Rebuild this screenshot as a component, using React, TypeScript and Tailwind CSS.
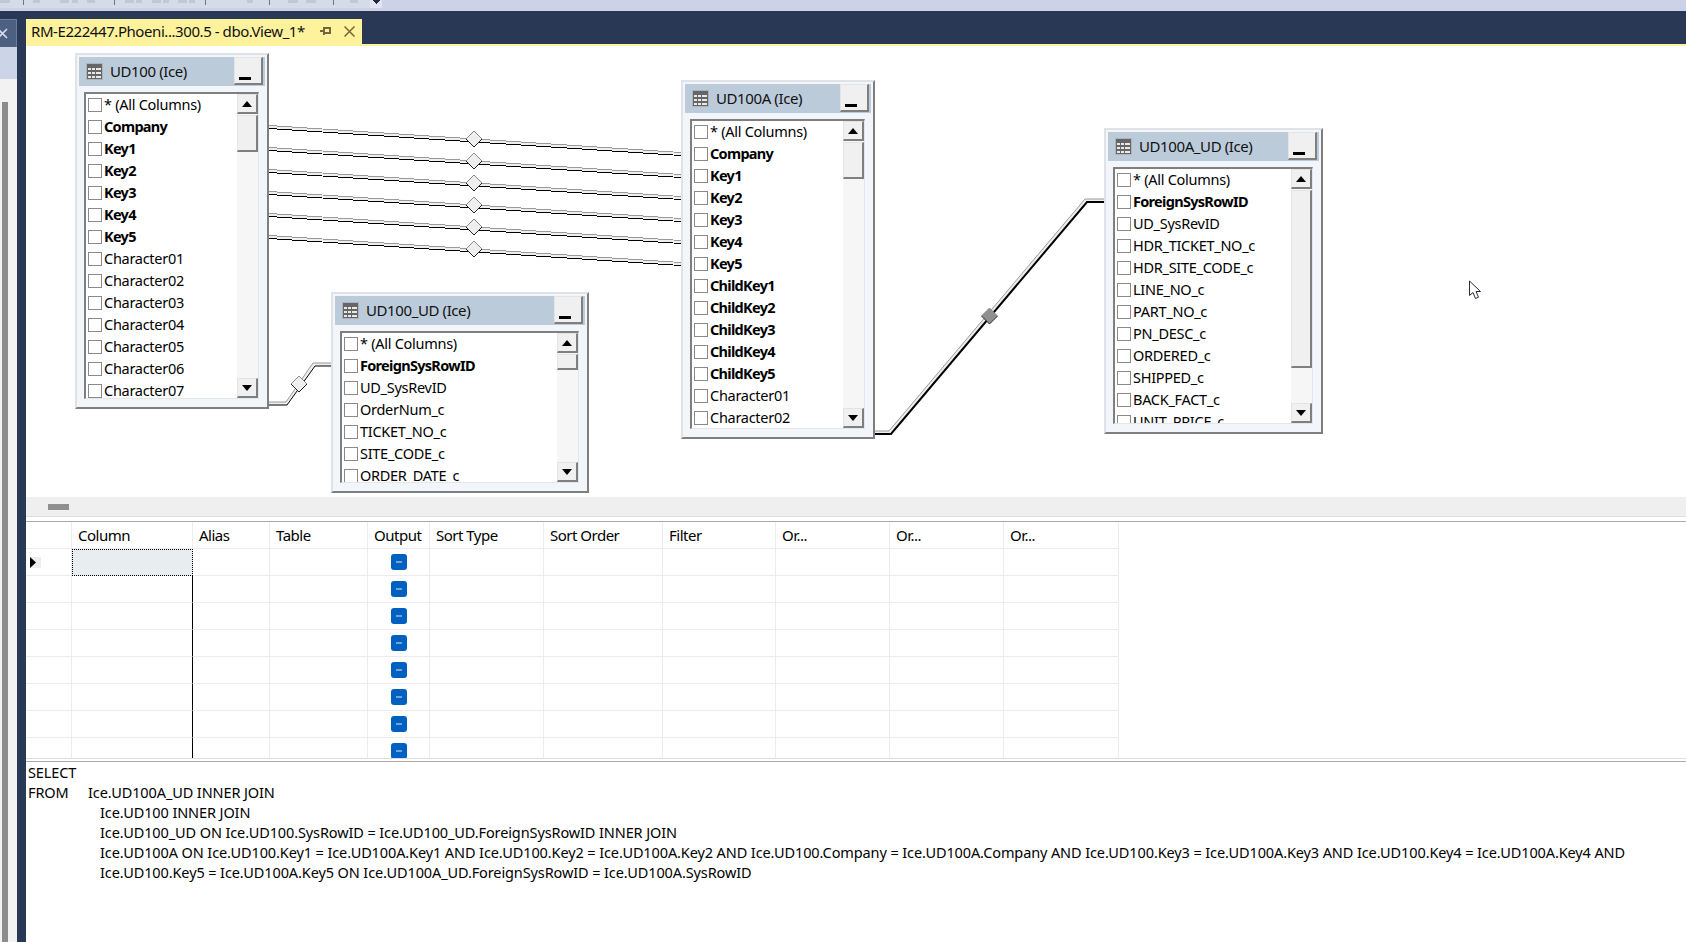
import React from 'react';

type Row = { name: string; bold?: boolean };

const keyRows = (names: string[]): Row[] => names.map((name) => ({ name, bold: true }));
const plainRows = (names: string[]): Row[] => names.map((name) => ({ name }));

const ud100Rows: Row[] = [
  { name: '* (All Columns)' },
  ...keyRows(['Company', 'Key1', 'Key2', 'Key3', 'Key4', 'Key5']),
  ...plainRows(['Character01', 'Character02', 'Character03', 'Character04', 'Character05', 'Character06', 'Character07']),
];

const ud100UdRows: Row[] = [
  { name: '* (All Columns)' },
  { name: 'ForeignSysRowID', bold: true },
  ...plainRows(['UD_SysRevID', 'OrderNum_c', 'TICKET_NO_c', 'SITE_CODE_c', 'ORDER_DATE_c']),
];

const ud100aRows: Row[] = [
  { name: '* (All Columns)' },
  ...keyRows(['Company', 'Key1', 'Key2', 'Key3', 'Key4', 'Key5', 'ChildKey1', 'ChildKey2', 'ChildKey3', 'ChildKey4', 'ChildKey5']),
  ...plainRows(['Character01', 'Character02']),
];

const ud100aUdRows: Row[] = [
  { name: '* (All Columns)' },
  { name: 'ForeignSysRowID', bold: true },
  ...plainRows(['UD_SysRevID', 'HDR_TICKET_NO_c', 'HDR_SITE_CODE_c', 'LINE_NO_c', 'PART_NO_c', 'PN_DESC_c', 'ORDERED_c', 'SHIPPED_c', 'BACK_FACT_c', 'UNIT_PRICE_c']),
];

const TableIcon = () => (
  <svg width="17" height="17" viewBox="0 0 17 17" className="shrink-0" shapeRendering="crispEdges">
    <rect x="0" y="0" width="17" height="17" fill="#a9b4bf" />
    <rect x="1" y="1" width="15" height="15" fill="#666666" />
    {[5, 9, 13].flatMap((y) =>
      [2, 6, 10, 13].map((x) => <rect key={`${x}-${y}`} x={x} y={y} width={x === 13 ? 2 : 3} height="2" fill="#e9e9e9" />)
    )}
  </svg>
);

const ScrollButton = ({ down }: { down?: boolean }) => (
  <div className={`h-[20px] shrink-0 flex items-center justify-center bg-[#f0f0f0] border-t border-l border-[#e4e4e4] border-r-2 border-b-2 border-r-[#7f7f7f] border-b-[#7f7f7f] ${down ? 'mt-auto' : ''}`}>
    <svg width="10" height="6" viewBox="0 0 10 6">
      <path d={down ? 'M0 0H10L5 6Z' : 'M0 6H10L5 0Z'} fill="#000" />
    </svg>
  </div>
);

const TableNode = ({ title, rows, className, thumb }: { title: string; rows: Row[]; className: string; thumb: string }) => (
  <div className={`absolute z-10 flex flex-col p-[2px] bg-[#f2f6fb] border-2 border-t-[#dfe3e8] border-l-[#dfe3e8] border-r-[#7f7f7f] border-b-[#7f7f7f] ${className}`}>
    <div className="h-[29px] shrink-0 flex items-start bg-[#bccbda]">
      <div className="h-full flex items-center flex-1 pl-[7px] gap-[7px]">
        <TableIcon />
        <span className="text-[15px] tracking-[-0.4px] text-[#111]">{title}</span>
      </div>
      <div className="w-[29px] h-[28px] mr-[2px] relative bg-[#f0f0f0] border-t border-l border-[#e4e4e4] border-r-2 border-b-2 border-r-[#7f7f7f] border-b-[#7f7f7f]">
        <div className="absolute left-[4px] top-[19px] w-[12px] h-[3px] bg-black" />
      </div>
    </div>
    <div className="flex-1 min-h-0 mt-[6px] ml-[5px] mr-[6px] mb-[6px] flex bg-white border-t-2 border-l-2 border-t-[#7f7f7f] border-l-[#7f7f7f] border-r border-b border-r-[#e3e6ea] border-b-[#e3e6ea]">
      <div className="flex-1 min-w-0 overflow-hidden">
        {rows.map((row) => (
          <div key={row.name} className="h-[22px] pl-[2px] flex items-center gap-[2px] whitespace-nowrap">
            <span className="w-[14px] h-[14px] shrink-0 bg-white border border-[#8a8a8a]" />
            <span className={`text-[14.5px] text-black ${row.bold ? 'font-bold tracking-[-0.7px]' : 'tracking-[-0.28px]'}`}>{row.name}</span>
          </div>
        ))}
      </div>
      <div className="w-[21px] shrink-0 flex flex-col bg-[#f6f6f6]">
        <ScrollButton />
        <div className={`mt-[1px] shrink-0 bg-[#f0f0f0] border-t border-l border-[#e4e4e4] border-r-2 border-b-2 border-r-[#7f7f7f] border-b-[#7f7f7f] ${thumb}`} />
        <ScrollButton down />
      </div>
    </div>
  </div>
);

const Diamond = ({ x, y, fill = '#eeeeee' }: { x: number; y: number; fill?: string }) => (
  <g>
    <polygon points={`${x - 8},${y} ${x},${y - 8} ${x + 8},${y} ${x},${y + 8}`} fill={fill} />
    <polyline points={`${x - 8},${y} ${x},${y - 8} ${x + 8},${y}`} fill="none" stroke="#8a8a8a" />
    <polyline points={`${x - 8},${y} ${x},${y + 8} ${x + 8},${y}`} fill="none" stroke="#222222" />
  </g>
);

// the six key joins between UD100 and UD100A, 22px apart
const joinOffsets = [0, 22, 44, 66, 88, 110];

const Connectors = () => (
  <svg className="absolute inset-0 w-full h-full" xmlns="http://www.w3.org/2000/svg">
    <g transform="translate(-26 -46)">
      {joinOffsets.map((dy) => (
        <g key={dy}>
          <polygon points={`269,${125 + dy} 681,${152 + dy} 681,${155 + dy} 269,${128 + dy}`} fill="#eeeeee" />
          <line x1="269" y1={125.5 + dy} x2="681" y2={152.5 + dy} stroke="#9a9a9a" shapeRendering="crispEdges" />
          <line x1="269" y1={128.5 + dy} x2="681" y2={155.5 + dy} stroke="#000" shapeRendering="crispEdges" />
          <Diamond x={474} y={139 + dy} />
        </g>
      ))}
      <polygon points="269,402 286,402 313,363 331,363 331,366 315,366 287,405 269,405" fill="#eeeeee" />
      <polyline points="269,402 286,402 313,363 331,363" fill="none" stroke="#9a9a9a" />
      <polyline points="269,405 287,405 315,366 331,366" fill="none" stroke="#000" />
      <Diamond x={299} y={384} />
      <polygon points="875,431 889,431 1085,199 1104,199 1104,202 1087,202 891,434 875,434" fill="#eeeeee" />
      <polyline points="875,431 889,431 1085,199 1104,199" fill="none" stroke="#9a9a9a" />
      <polyline points="875,434 891,434 1087,202 1104,202" fill="none" stroke="#000" strokeWidth="2" />
      <Diamond x={989.5} y={316} fill="#909090" />
    </g>
  </svg>
);

const Cursor = () => (
  <svg className="absolute left-[1468px] top-[280px] z-20" width="14" height="20" viewBox="0 0 14 20">
    <path d="M1.5 1V15.5L5 12.5L7.5 18.5L10.5 17.2L8 11.5H12.5Z" fill="#fff" stroke="#2b2b3a" strokeWidth="1" />
  </svg>
);

const columns = [
  { label: '', cls: 'w-[46px]' },
  { label: 'Column', cls: 'w-[121px]' },
  { label: 'Alias', cls: 'w-[77px]' },
  { label: 'Table', cls: 'w-[98px]' },
  { label: 'Output', cls: 'w-[62px]' },
  { label: 'Sort Type', cls: 'w-[114px]' },
  { label: 'Sort Order', cls: 'w-[119px]' },
  { label: 'Filter', cls: 'w-[113px]' },
  { label: 'Or...', cls: 'w-[114px]' },
  { label: 'Or...', cls: 'w-[114px]' },
  { label: 'Or...', cls: 'w-[115px]' },
];

const OutputToggle = () => (
  <div className="w-[16px] h-[16px] rounded-[3px] bg-[#0060c0] flex items-center justify-center">
    <div className="w-[6px] h-[2px] bg-[#6fa3da]" />
  </div>
);

const CriteriaGrid = () => (
  <div className="h-[236px] shrink-0 overflow-hidden bg-white">
    <div className="flex h-[27px]">
      {columns.map((col, i) => (
        <div key={i} className={`${col.cls} shrink-0 h-full flex items-center pl-[6px] border-r border-b border-[#ececec] text-[15px] tracking-[-0.5px] text-black`}>
          {col.label}
        </div>
      ))}
    </div>
    {[0, 1, 2, 3, 4, 5, 6, 7].map((row) => (
      <div key={row} className="flex h-[27px]">
        {columns.map((col, i) => (
          <div
            key={i}
            className={`${col.cls} shrink-0 h-full flex items-center justify-center border-b border-[#ececec] ${i === 1 ? 'border-r border-r-black' : 'border-r border-r-[#ececec]'} ${i === 1 && row === 0 ? 'bg-[#e8edf0] border-t border-l border-b-black border-dotted border-t-black border-l-black' : ''}`}
          >
            {i === 0 && row === 0 && (
              <div className="w-[11px] h-[11px] mr-auto ml-[4px] bg-[#eeeeee]">
                <svg width="6" height="11" viewBox="0 0 6 11">
                  <path d="M0 0L6 5.5L0 11Z" fill="#000" />
                </svg>
              </div>
            )}
            {i === 4 && <OutputToggle />}
          </div>
        ))}
      </div>
    ))}
  </div>
);

const ToolbarSliver = () => (
  <svg width="386" height="11" viewBox="0 0 386 11" className="absolute left-0 top-0" shapeRendering="crispEdges">
    <rect x="0" y="0" width="370" height="8" fill="#d6dbe8" />
    {[23, 114, 205, 269, 333].map((x) => (
      <rect key={x} x={x} y="0" width="1" height="5" fill="#6d7486" />
    ))}
    {[[0, 10], [33, 7], [60, 9], [72, 6], [87, 8], [125, 9], [136, 6], [152, 9], [163, 6], [178, 9], [189, 6], [247, 6], [288, 10], [306, 10], [350, 8]].map(([x, w]) => (
      <rect key={x} x={x} y="0" width={w} height="3" fill="#c2c7d5" />
    ))}
    <rect x="370" y="0" width="12" height="8" fill="#e2e5f1" />
    <path d="M372 0H381L376.5 4Z" fill="#1f2a44" />
  </svg>
);

export default function App() {
  const font = { fontFamily: '"Noto Sans", "Open Sans", sans-serif' };
  return (
    <div className="w-[1686px] h-[942px] overflow-hidden relative flex flex-col bg-[#293955]" style={font}>
      <div className="h-[11px] shrink-0 relative bg-[#ccd3e8]">
        <ToolbarSliver />
      </div>
      <div className="flex-1 min-h-0 flex">
        <div className="w-[17px] shrink-0 flex flex-col pt-[8px]">
          <div className="h-[28px] shrink-0 bg-[#4d6082] border-t border-r border-[#6a7c9c] overflow-hidden relative">
            <svg className="absolute left-[-3px] top-[8px]" width="11" height="11" viewBox="0 0 11 11">
              <path d="M1 1L10 10M10 1L1 10" stroke="#d6dbe8" strokeWidth="1.6" />
            </svg>
          </div>
          <div className="h-[32px] shrink-0 bg-[#ccd5e8]" />
          <div className="flex-1 bg-[#f2f2f2] pl-[2px] pt-[23px]">
            <div className="w-[6px] h-full bg-[#8c8c8c]" />
          </div>
        </div>
        <div className="w-[9px] shrink-0" />
        <div className="flex-1 min-w-0 flex flex-col">
          <div className="h-[33px] shrink-0 flex items-end">
            <div className="w-[336px] h-[25px] bg-[#fff29d] flex items-center pl-[5px] text-[15px] tracking-[-0.43px] text-[#111] whitespace-nowrap">
              <span className="w-[289px]">RM-E222447.Phoeni...300.5 - dbo.View_1*</span>
              <svg width="11" height="11" viewBox="0 0 11 11" shapeRendering="crispEdges">
                <path d="M0 5H4M4 1V9M4 2H10V7H4" fill="none" stroke="#75673a" strokeWidth="1.5" />
              </svg>
              <svg className="ml-[13px]" width="11" height="11" viewBox="0 0 11 11">
                <path d="M0.5 0.5L10.5 10.5M10.5 0.5L0.5 10.5" stroke="#75673a" strokeWidth="1.5" />
              </svg>
            </div>
          </div>
          <div className="h-[2px] shrink-0 bg-[#fff29d]" />
          <div className="h-[451px] shrink-0 relative bg-white">
            <Connectors />
            <TableNode title="UD100 (Ice)" rows={ud100Rows} thumb="h-[37px]" className="left-[49px] top-[7px] w-[194px] h-[356px]" />
            <TableNode title="UD100_UD (Ice)" rows={ud100UdRows} thumb="h-[16px]" className="left-[305px] top-[246px] w-[258px] h-[201px]" />
            <TableNode title="UD100A (Ice)" rows={ud100aRows} thumb="h-[37px]" className="left-[655px] top-[34px] w-[194px] h-[359px]" />
            <TableNode title="UD100A_UD (Ice)" rows={ud100aUdRows} thumb="h-[178px]" className="left-[1078px] top-[82px] w-[219px] h-[306px]" />
          </div>
          <div className="h-[20px] shrink-0 bg-[#efefef] border-b border-[#dddddd] flex items-center pl-[22px]">
            <div className="w-[21px] h-[6px] bg-[#8f8f8f]" />
          </div>
          <div className="h-[5px] shrink-0 bg-white border-b border-[#a8a8a8]" />
          <CriteriaGrid />
          <div className="h-[4px] shrink-0 bg-white border-t border-b border-t-[#dddddd] border-b-[#a8a8a8]" />
          <div className="flex-1 min-h-0 bg-white pl-[2px] text-[14.5px] tracking-[-0.11px] text-black whitespace-nowrap leading-[20px]">
            <div>SELECT</div>
            <div className="flex">
              <span className="w-[60px]">FROM</span>
              <span>Ice.UD100A_UD INNER JOIN</span>
            </div>
            <div className="pl-[72px]">Ice.UD100 INNER JOIN</div>
            <div className="pl-[72px]">Ice.UD100_UD ON Ice.UD100.SysRowID = Ice.UD100_UD.ForeignSysRowID INNER JOIN</div>
            <div className="pl-[72px]">Ice.UD100A ON Ice.UD100.Key1 = Ice.UD100A.Key1 AND Ice.UD100.Key2 = Ice.UD100A.Key2 AND Ice.UD100.Company = Ice.UD100A.Company AND Ice.UD100.Key3 = Ice.UD100A.Key3 AND Ice.UD100.Key4 = Ice.UD100A.Key4 AND</div>
            <div className="pl-[72px]">Ice.UD100.Key5 = Ice.UD100A.Key5 ON Ice.UD100A_UD.ForeignSysRowID = Ice.UD100A.SysRowID</div>
          </div>
        </div>
      </div>
      <Cursor />
    </div>
  );
}
